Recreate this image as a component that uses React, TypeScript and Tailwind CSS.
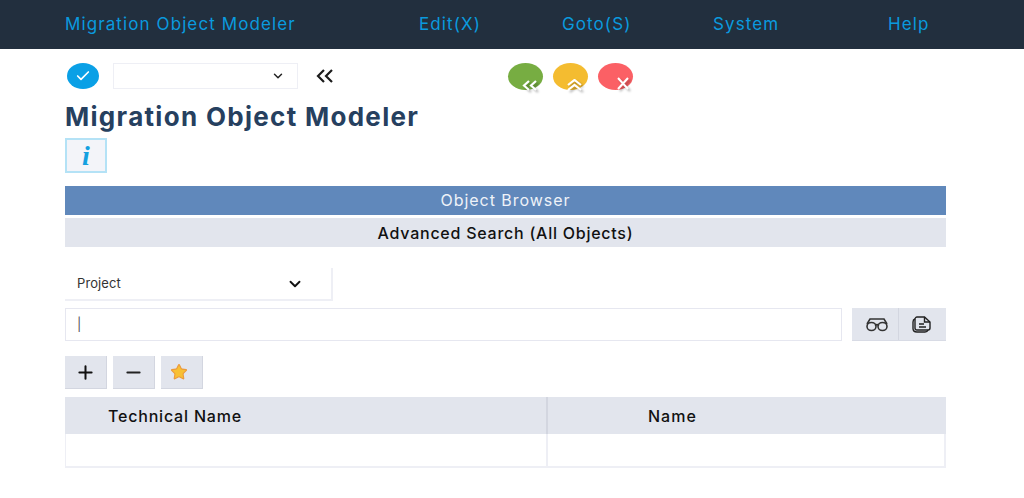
import type { ReactNode } from "react";
import { Check, ChevronDown, Minus, Plus, Star } from "lucide-react";

function StatusButton({ color, children }: { color: string; children: ReactNode }) {
  return (
    <div className={`relative h-[27px] w-[35px] rounded-[50%] ${color}`}>
      {children}
    </div>
  );
}

const toolButton = "flex h-[33px] w-[42px] items-center justify-center border-r border-b border-[#d3d6e0] bg-[#e2e5ed]";

export default function App() {
  return (
    <div className="h-[498px] w-[1024px] overflow-hidden bg-white font-['Inter',sans-serif]">
      <header className="flex h-[49px] items-center bg-[#222f3e] pl-[65px] text-[17px] tracking-[1.1px] text-[#0a9ade]">
        <span className="w-[354px]">Migration Object Modeler</span>
        <span className="w-[143px]">Edit(X)</span>
        <span className="w-[151px]">Goto(S)</span>
        <span className="w-[175px]">System</span>
        <span>Help</span>
      </header>

      <main className="w-[946px] pl-[65px]">
        <div className="mt-[14px] flex h-[26px] items-center">
          <div className="ml-[2px] flex h-[26px] w-[32px] items-center justify-center rounded-[50%] bg-[#0aa0e6]">
            <Check size={16} strokeWidth={2.5} className="text-white" />
          </div>
          <div className="ml-[14px] flex h-[26px] w-[185px] items-center justify-end border border-[#eeeff5] pr-[12px]">
            <ChevronDown size={14} strokeWidth={2.5} className="text-[#222]" />
          </div>
          <svg width="18" height="14" viewBox="0 0 18 14" fill="none" stroke="#1c1c1c" strokeWidth="2.2" className="ml-[18px]">
            <path d="M8 1 2 7l6 6M16 1l-6 6 6 6" />
          </svg>
          <div className="ml-[174px] flex gap-[10px]">
            <StatusButton color="bg-[#77ad42]">
              <svg width="15" height="11" viewBox="0 0 15 11" fill="none" stroke="#fff" strokeWidth="2.2" className="absolute top-[17px] left-[14px] drop-shadow-[2px_2px_1px_rgba(0,0,0,0.3)]">
                <path d="M7 1 2 5.500 7 10M14 1 9 5.500l5 4.500" />
              </svg>
            </StatusButton>
            <StatusButton color="bg-[#f4bc30]">
              <svg width="15" height="12" viewBox="0 0 15 12" fill="none" stroke="#fff" strokeWidth="2.2" className="absolute top-[16px] left-[14px] drop-shadow-[2px_2px_1px_rgba(0,0,0,0.3)]">
                <path d="M1 6l6.500-5L14 6M1 11l6.500-5 6.500 5" />
              </svg>
            </StatusButton>
            <StatusButton color="bg-[#fb6065]">
              <svg width="12" height="13" viewBox="0 0 12 13" fill="none" stroke="#fff" strokeWidth="2" className="absolute top-[14px] left-[19px] drop-shadow-[2px_2px_1px_rgba(0,0,0,0.3)]">
                <path d="M1 1l10 11M11 1 1 12" />
              </svg>
            </StatusButton>
          </div>
        </div>

        <h1 className="mt-[11px] text-[26px] leading-[33px] font-bold tracking-[1.3px] text-[#26405f]">Migration Object Modeler</h1>

        <div className="mt-[5px] flex h-[35px] w-[42px] items-center justify-center border-2 border-[#b4e2f6] bg-[#f3f4f9]">
          <span className="font-['Liberation_Serif',serif] text-[28px] leading-none font-bold text-[#14a0e0] italic">i</span>
        </div>

        <div className="mt-[13px] flex h-[29px] items-center justify-center pb-[1px] bg-[#6088bb] text-[16px] tracking-[0.95px] text-[#eef2f8]">Object Browser</div>
        <div className="mt-[3px] flex h-[29px] items-center justify-center bg-[#e2e5ed] text-[16px] font-medium tracking-[0.75px] text-[#111]">Advanced Search (All Objects)</div>

        <div className="mt-[21px] flex h-[33px] w-[268px] items-center justify-between border-r-2 border-b-2 border-[#eeeff5] pt-[1px] pr-[27px] pl-[12px] text-[13px] tracking-[0.1px] text-[#333]">
          <span>Project</span>
          <ChevronDown size={18} strokeWidth={2.5} className="text-[#111]" />
        </div>

        <div className="mt-[7px] flex h-[33px] gap-[10px]">
          <div className="flex flex-1 items-center border border-[#e6e7f0] pl-[11px] text-[13px] text-[#555]">|</div>
          <div className="flex w-[94px] border-b border-[#d8dbe5] bg-[#e2e5ed]">
            <div className="flex w-[47px] items-center justify-center border-r border-[#d3d6e0] pl-[3px]">
              <svg width="22" height="15" viewBox="0 0 22 15" fill="none" stroke="#333" strokeWidth="1.6">
                <path d="M1 7 4 2h14l3 5M9 8.500c1.200-1 2.800-1 4 0" />
                <ellipse cx="5.500" cy="9.500" rx="4.500" ry="4" />
                <ellipse cx="16.500" cy="9.500" rx="4.500" ry="4" />
              </svg>
            </div>
            <div className="flex w-[47px] items-center justify-center pr-[2px]">
              <svg width="19" height="17" viewBox="0 0 19 17" fill="none" stroke="#222" strokeWidth="1.4">
                <path d="M3 3C1.500 3.500 1 4.500 1 6v6.500C1 15 2.500 16 5 16h8c1.500 0 2.500-.5 3-2" />
                <path d="M5 1h7.500L18 6v6c0 1.200-.8 2-2 2H5c-1 0-2-.8-2-2V3c0-1 1-2 2-2Z" />
                <path d="M12.500 1v5H18M7 8h5M7 11h7" />
              </svg>
            </div>
          </div>
        </div>

        <div className="mt-[15px] flex gap-[6px]">
          <div className={toolButton}>
            <Plus size={21} strokeWidth={2.3} className="text-[#111]" />
          </div>
          <div className={toolButton}>
            <Minus size={21} strokeWidth={2.3} className="text-[#222]" />
          </div>
          <div className={`${toolButton} pr-[6px]`}>
            <Star size={18} strokeWidth={1.5} className="fill-[#f8c033] text-[#ec9a3c]" />
          </div>
        </div>

        <div className="mt-[8px] grid grid-cols-[483px_1fr]">
          <div className="flex h-[37px] items-center border-r-2 border-[#d3d6e0] bg-[#e2e5ed] pl-[43px] text-[16px] font-medium tracking-[0.8px] text-[#111]">Technical Name</div>
          <div className="flex h-[37px] items-center bg-[#e2e5ed] pl-[100px] text-[16px] font-medium tracking-[1px] text-[#111]">Name</div>
          <div className="h-[34px] border-r-2 border-b-2 border-l border-[#eeeff5]" />
          <div className="h-[34px] border-r-2 border-b-2 border-[#eeeff5]" />
        </div>
      </main>
    </div>
  );
}
